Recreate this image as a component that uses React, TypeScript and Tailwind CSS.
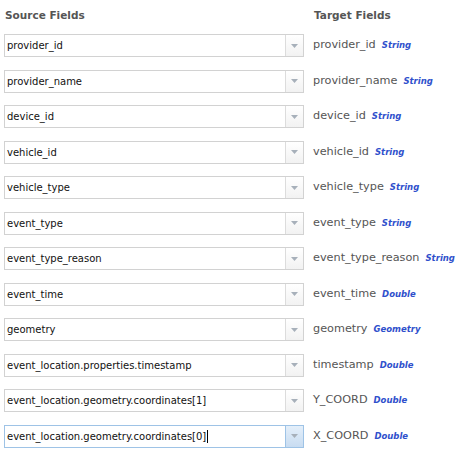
const rows: { source: string; target: string; type: string }[] = [
  { source: "provider_id", target: "provider_id", type: "String" },
  { source: "provider_name", target: "provider_name", type: "String" },
  { source: "device_id", target: "device_id", type: "String" },
  { source: "vehicle_id", target: "vehicle_id", type: "String" },
  { source: "vehicle_type", target: "vehicle_type", type: "String" },
  { source: "event_type", target: "event_type", type: "String" },
  { source: "event_type_reason", target: "event_type_reason", type: "String" },
  { source: "event_time", target: "event_time", type: "Double" },
  { source: "geometry", target: "geometry", type: "Geometry" },
  { source: "event_location.properties.timestamp", target: "timestamp", type: "Double" },
  { source: "event_location.geometry.coordinates[1]", target: "Y_COORD", type: "Double" },
  { source: "event_location.geometry.coordinates[0]", target: "X_COORD", type: "Double" },
];

function Arrow() {
  return (
    <svg width="7" height="4" viewBox="0 0 7 4">
      <path d="M0 0 L7 0 L3.5 4 Z" fill="#a7b0ba" />
    </svg>
  );
}

export default function App() {
  return (
    <div className="w-[474px] h-[475px] bg-white pl-[4px] pt-[8px] font-['DejaVu_Sans',sans-serif]">
      <div className="flex h-[16px] items-center text-[10.5px] font-bold text-[#555]">
        <div className="w-[310px] pl-[1px]">Source Fields</div>
        <div>Target Fields</div>
      </div>
      <div className="mt-[10px] flex flex-col gap-[12.5px]">
        {rows.map((r, i) => {
          const active = i === rows.length - 1;
          return (
            <div key={r.source} className="flex items-center">
              <div
                className={`flex h-[23px] w-[300px] border bg-white ${
                  active ? "border-[#9ec3e6]" : "border-[#d2d2d2]"
                }`}
              >
                <div className="flex flex-1 items-center pl-[2px] text-[10px] text-[#111]">
                  {r.source}
                  {active && <span className="ml-[1px] h-[13px] w-px bg-black" />}
                </div>
                <div
                  className={`flex w-[18px] items-center justify-center border-l ${
                    active
                      ? "border-[#9ec3e6] bg-gradient-to-b from-[#e4effa] to-[#c8dcf1]"
                      : "border-[#dcdcdc] bg-gradient-to-b from-[#ffffff] to-[#f2f2f2]"
                  }`}
                >
                  <Arrow />
                </div>
              </div>
              <div className="ml-[9px] flex items-baseline gap-[6px]">
                <span className="text-[11.25px] text-[#555]">{r.target}</span>
                <span className="text-[8.5px] font-semibold italic text-[#2f50cc]">
                  {r.type}
                </span>
              </div>
            </div>
          );
        })}
      </div>
    </div>
  );
}
